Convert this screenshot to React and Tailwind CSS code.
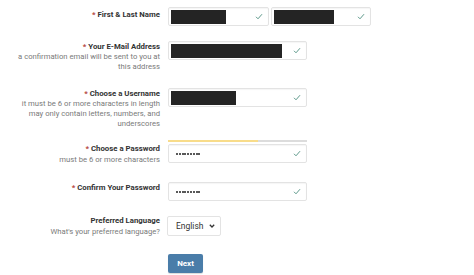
import React from "react";

const Check = () => (
  <svg width="8" height="7" viewBox="0 0 8 7" className="shrink-0">
    <path d="M1 3.8 L3 5.8 L7 1.2" fill="none" stroke="#5f9a8c" strokeWidth="1" />
  </svg>
);

const Field = ({ w, boxW, children, check = true }) => (
  <div
    className="flex items-center h-[19px] border border-[#e3e3e3] rounded-[2px] bg-white pl-[2px] pr-[5px] shadow-[inset_0_1px_1px_rgba(0,0,0,0.04)]"
    style={{ width: w }}
  >
    {boxW ? <div className="h-[14px] bg-[#242424]" style={{ width: boxW }} /> : children}
    <div className="flex-1" />
    {check && <Check />}
  </div>
);

const Label = ({ req = true, children, className = "" }) => (
  <div className={"text-[7.8px] leading-[11px] font-bold text-[#333] " + className}>
    {req && <span className="text-[#b5473f] mr-[2px]">*</span>}
    {children}
  </div>
);

const Desc = ({ children, className = "" }) => (
  <div className={"text-[7.7px] text-[#7a7a7a] " + className}>{children}</div>
);

const Dots = () => (
  <div className="flex gap-[0.8px] pl-[5px]">
    {[0, 1, 2, 3, 4, 5, 6, 7, 8].map((i) => (
      <div key={i} className="w-[2px] h-[2px] rounded-full bg-[#222]" />
    ))}
  </div>
);

export default function App() {
  return (
    <div
      className="w-[474px] h-[275px] bg-white overflow-hidden"
      style={{ fontFamily: "Roboto, 'Liberation Sans', sans-serif" }}
    >
      {/* Row 1 */}
      <div className="flex mt-[7px]">
        <div className="w-[160px] text-right pt-[2px]">
          <Label>First &amp; Last Name</Label>
        </div>
        <div className="ml-[8px] flex gap-[2px]">
          <Field w={101} boxW={55} />
          <Field w={100} boxW={60} />
        </div>
      </div>

      {/* Row 2 */}
      <div className="flex mt-[15px]">
        <div className="w-[160px] text-right">
          <Label>Your E-Mail Address</Label>
          <Desc className="leading-[10px]">
            a confirmation email will be sent to you at
            <br />
            this address
          </Desc>
        </div>
        <div className="ml-[8px]">
          <Field w={139} boxW={111} />
        </div>
      </div>

      {/* Row 3 */}
      <div className="flex mt-[16px]">
        <div className="w-[160px] text-right">
          <Label>Choose a Username</Label>
          <Desc className="leading-[10px]">
            it must be 6 or more characters in length
            <br />
            may only contain letters, numbers, and
            <br />
            underscores
          </Desc>
        </div>
        <div className="ml-[8px]">
          <Field w={139} boxW={65} />
        </div>
      </div>

      {/* Row 4 */}
      <div className="flex mt-[11px]">
        <div className="w-[160px] text-right pt-[3px]">
          <Label>Choose a Password</Label>
          <Desc className="leading-[12px]">must be 6 or more characters</Desc>
        </div>
        <div className="ml-[8px] flex flex-col">
          <div className="flex w-[139px] h-[2px] bg-[#dcdcdc]">
            <div className="w-[90px] h-[2px] bg-[#f8dc8a]" />
          </div>
          <div className="mt-[2px]">
            <Field w={139}>
              <Dots />
            </Field>
          </div>
        </div>
      </div>

      {/* Row 5 */}
      <div className="flex mt-[16px]">
        <div className="w-[160px] text-right">
          <Label>Confirm Your Password</Label>
        </div>
        <div className="ml-[8px]">
          <Field w={139}>
            <Dots />
          </Field>
        </div>
      </div>

      {/* Row 6 */}
      <div className="flex mt-[14px]">
        <div className="w-[160px] text-right">
          <Label req={false}>Preferred Language</Label>
          <Desc className="leading-[12px]">What's your preferred language?</Desc>
        </div>
        <div className="ml-[7px] pt-[1px]">
          <div className="flex items-center w-[54px] h-[20px] border border-[#e3e3e3] rounded-[2px] bg-white pl-[8px] pr-[5px]">
            <span className="text-[8.5px] text-[#333]">English</span>
            <div className="flex-1" />
            <svg width="6" height="4" viewBox="0 0 6 4">
              <path d="M0.8 0.8 L3 3 L5.2 0.8" fill="none" stroke="#333" strokeWidth="1.3" />
            </svg>
          </div>
        </div>
      </div>

      {/* Button */}
      <div className="flex mt-[16px]">
        <div className="w-[168px]" />
        <button className="w-[35px] h-[19px] bg-[#4a7da9] rounded-[2px] text-white text-[8px] font-bold flex items-center justify-center shadow-[0_1px_1px_rgba(0,0,0,0.15)]">
          Next
        </button>
      </div>
    </div>
  );
}
